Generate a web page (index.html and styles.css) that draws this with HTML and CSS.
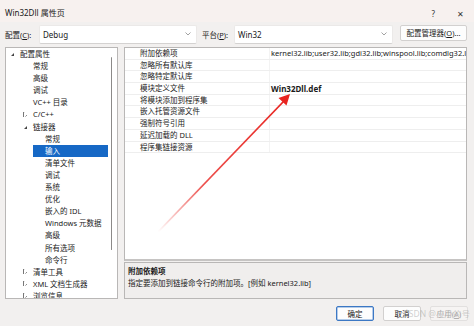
FILE: index.html
```html
<!DOCTYPE html>
<html lang="zh-CN">
<head>
  <meta charset="UTF-8" />
  <title>Win32Dll 属性页</title>
  <link rel="stylesheet" href="styles.css">
</head>
<body>
  <div class="dialog">
    <!-- Title bar -->
    <div class="titlebar">
      <div class="title">Win32Dll 属性页</div>
      <div class="title-btns">
        <span class="help">?</span>
        <span class="close">✕</span>
      </div>
    </div>

    <!-- Configuration / platform -->
    <div class="toolbar">
      <span class="label label-config">配置(<u>C</u>):</span>
      <div class="select select-config">
        <span>Debug</span>
        <svg class="chevron" width="6" height="4" viewBox="0 0 6 4"><path d="M0.5 0.5 L3 3 L5.5 0.5" fill="none" stroke="#8a8a8a" stroke-width="0.8"/></svg>
      </div>
      <span class="label label-platform">平台(<u>P</u>):</span>
      <div class="select select-platform">
        <span>Win32</span>
        <svg class="chevron" width="6" height="4" viewBox="0 0 6 4"><path d="M0.5 0.5 L3 3 L5.5 0.5" fill="none" stroke="#8a8a8a" stroke-width="0.8"/></svg>
      </div>
      <button class="btn-manager">配置管理器(<u>O</u>)...</button>
    </div>

    <div class="main">
      <!-- Tree -->
      <div class="tree">
        <div class="tree-list">
          <div class="node lv0"><span class="tw open"></span>配置属性</div>
          <div class="node lv1">常规</div>
          <div class="node lv1">高级</div>
          <div class="node lv1">调试</div>
          <div class="node lv1">VC++ 目录</div>
          <div class="node lv1"><span class="tw closed"></span>C/C++</div>
          <div class="node lv1"><span class="tw open"></span>链接器</div>
          <div class="node lv2">常规</div>
          <div class="node lv2 selected">输入</div>
          <div class="node lv2">清单文件</div>
          <div class="node lv2">调试</div>
          <div class="node lv2">系统</div>
          <div class="node lv2">优化</div>
          <div class="node lv2">嵌入的 IDL</div>
          <div class="node lv2">Windows 元数据</div>
          <div class="node lv2">高级</div>
          <div class="node lv2">所有选项</div>
          <div class="node lv2">命令行</div>
          <div class="node lv1"><span class="tw closed"></span>清单工具</div>
          <div class="node lv1"><span class="tw closed"></span>XML 文档生成器</div>
          <div class="node lv1"><span class="tw closed"></span>浏览信息</div>
        </div>
        <div class="scroll-thumb"></div>
      </div>

      <!-- Property grid + description -->
      <div class="right">
        <div class="grid">
          <div class="row"><span class="name">附加依赖项</span><span class="value">kernel32.lib;user32.lib;gdi32.lib;winspool.lib;comdlg32.lib</span></div>
          <div class="row"><span class="name">忽略所有默认库</span><span class="value"></span></div>
          <div class="row"><span class="name">忽略特定默认库</span><span class="value"></span></div>
          <div class="row"><span class="name">模块定义文件</span><span class="value bold">Win32Dll.def</span></div>
          <div class="row"><span class="name">将模块添加到程序集</span><span class="value"></span></div>
          <div class="row"><span class="name">嵌入托管资源文件</span><span class="value"></span></div>
          <div class="row"><span class="name">强制符号引用</span><span class="value"></span></div>
          <div class="row"><span class="name">延迟加载的 DLL</span><span class="value"></span></div>
          <div class="row"><span class="name">程序集链接资源</span><span class="value"></span></div>
        </div>
        <div class="desc">
          <div class="desc-title">附加依赖项</div>
          <div class="desc-text">指定要添加到链接命令行的附加项。[例如 kernel32.lib]</div>
        </div>
      </div>
    </div>

    <!-- Buttons -->
    <div class="footer">
      <button class="btn btn-ok">确定</button>
      <button class="btn">取消</button>
      <button class="btn btn-disabled">应用(<u>A</u>)</button>
      <span class="watermark">CSDN @小小的号</span>
    </div>

    <!-- Red annotation arrow -->
    <svg class="annotation" width="474" height="326" viewBox="0 0 474 326">
      <defs>
        <linearGradient id="fade" x1="158" y1="232" x2="288" y2="96" gradientUnits="userSpaceOnUse">
          <stop offset="0" stop-color="#e8231f" stop-opacity="0"/>
          <stop offset="0.35" stop-color="#e8231f" stop-opacity="0.8"/>
          <stop offset="1" stop-color="#e8231f"/>
        </linearGradient>
      </defs>
      <line x1="158" y1="232" x2="284" y2="101" stroke="url(#fade)" stroke-width="1.8"/>
      <polygon points="290,94 286.5,105.5 278.5,98" fill="#e8231f"/>
    </svg>
  </div>
</body>
</html>
```

FILE: styles.css
```css
* {
  box-sizing: border-box;
  margin: 0;
  padding: 0;
}

html, body {
  width: 474px;
  height: 326px;
  overflow: hidden;
  font-family: "Noto Sans", "Noto Sans CJK SC", sans-serif;
  font-size: 7.5px;
  color: #1a1a1a;
  background: #f2f0ef;
}

u {
  text-decoration: underline;
}

.dialog {
  position: relative;
  display: flex;
  flex-direction: column;
  width: 474px;
  height: 326px;
}

/* title bar */
.titlebar {
  height: 22px;
  display: flex;
  align-items: center;
  justify-content: space-between;
  padding: 0 10px 0 5px;
  background: #f7f1ef;
}

.title {
  font-size: 8px;
  padding-top: 3px;
}

.title-btns {
  display: flex;
  gap: 22px;
  font-size: 8px;
  color: #333;
  padding-top: 4px;
}

/* config row */
.toolbar {
  height: 23px;
  display: flex;
  align-items: center;
  padding: 1px 0 0 5px;
}

.label {
  font-size: 7.5px;
}

.label-config {
  width: 34px;
}

.label-platform {
  width: 32px;
  margin-left: 5px;
}

.select {
  height: 19px;
  display: flex;
  align-items: center;
  justify-content: space-between;
  padding: 0 5px 0 3px;
  background: #fff;
  border: 1px solid #ebe9e8;
  border-bottom-color: #d4d2d1;
  border-radius: 2px;
  font-size: 8px;
}

.select-config {
  width: 158px;
}

.select-platform {
  width: 159px;
}

.chevron {
  display: block;
}

.btn-manager {
  margin-left: 7px;
  width: 67px;
  height: 16px;
  margin-top: -3px;
  font-family: inherit;
  font-size: 7.5px;
  color: #1a1a1a;
  background: #fdfdfd;
  border: 1px solid #d2d0cf;
  border-radius: 2px;
}

/* main area */
.main {
  display: flex;
  gap: 6px;
  height: 254px;
  padding: 2px 7px 0 5px;
}

.tree {
  position: relative;
  flex-shrink: 0;
  width: 113px;
  height: 252px;
  background: #fff;
  border: 1px solid #b9b7b6;
  overflow: hidden;
}

.tree-list {
  width: 102px;
}

.node {
  height: 12.1px;
  line-height: 12.1px;
  white-space: nowrap;
  display: flex;
  align-items: center;
}

.lv0 { padding-left: 14px; }
.lv1 { padding-left: 27px; }
.lv2 { padding-left: 39px; }

.node.selected {
  margin-left: 27px;
  padding-left: 12px;
  background: #1668c5;
  color: #fff;
}

.tw {
  width: 0;
  height: 0;
  margin-left: -9px;
  margin-right: 6px;
}

.tw.open {
  border-left: 3px solid transparent;
  border-bottom: 3px solid #444;
  margin-top: 1px;
}

.tw.closed {
  width: 4px;
  height: 5px;
  margin-left: -10px;
  margin-right: 6px;
  background: linear-gradient(to top right, transparent 48%, #777 50%, transparent 60%) top / 100% 50% no-repeat,
              linear-gradient(to bottom right, transparent 48%, #777 50%, transparent 60%) bottom / 100% 50% no-repeat;
  border-left: 1px solid #777;
}

.scroll-thumb {
  position: absolute;
  right: 5px;
  top: 9px;
  width: 1.5px;
  height: 193px;
  background: #8c8a89;
  border-radius: 1px;
}

.right {
  flex: 1;
  min-width: 0;
  display: flex;
  flex-direction: column;
  gap: 1px;
}

.grid {
  height: 215px;
  background: #fff;
  border: 1px solid #b9b7b6;
  border-bottom: 2px solid #c6c4c3;
  overflow: hidden;
}

.row {
  display: flex;
  height: 11.7px;
  line-height: 11px;
  border-bottom: 1px solid #eeeeee;
  white-space: nowrap;
}

.name {
  width: 144px;
  flex-shrink: 0;
  padding-left: 15px;
}

.value {
  flex: 1;
  min-width: 0;
  overflow: hidden;
  padding-left: 1px;
  border-left: 1px solid #f3f3f3;
  font-size: 7.5px;
}

.bold {
  font-weight: bold;
  font-size: 8px;
}

.desc {
  height: 37px;
  padding: 3px 3px;
  background: #f0eeed;
  border: 1px solid #b9b7b6;
}

.desc-title {
  font-weight: bold;
  line-height: 11px;
}

.desc-text {
  line-height: 12px;
}

/* footer */
.footer {
  position: relative;
  flex: 1;
  display: flex;
  justify-content: flex-end;
  align-items: flex-start;
  gap: 9px;
  padding: 7px 6px 0 0;
}

.btn {
  width: 38px;
  height: 15px;
  font-family: inherit;
  font-size: 7.5px;
  color: #1a1a1a;
  background: #fdfdfd;
  border: 1px solid #d2d0cf;
  border-radius: 2px;
}

.btn-ok {
  border: 1px solid #3c78c4;
  box-shadow: inset 0 0 0 0.5px #6e9bd6;
}

.btn-disabled {
  color: #b0aeae;
  background: #f6f4f3;
  border-color: #e2e0df;
}

.watermark {
  position: absolute;
  right: 4px;
  top: 8px;
  font-size: 8.5px;
  color: rgba(150, 150, 150, 0.45);
  white-space: nowrap;
}

/* annotation overlay */
.annotation {
  position: absolute;
  left: 0;
  top: 0;
  pointer-events: none;
}
```
